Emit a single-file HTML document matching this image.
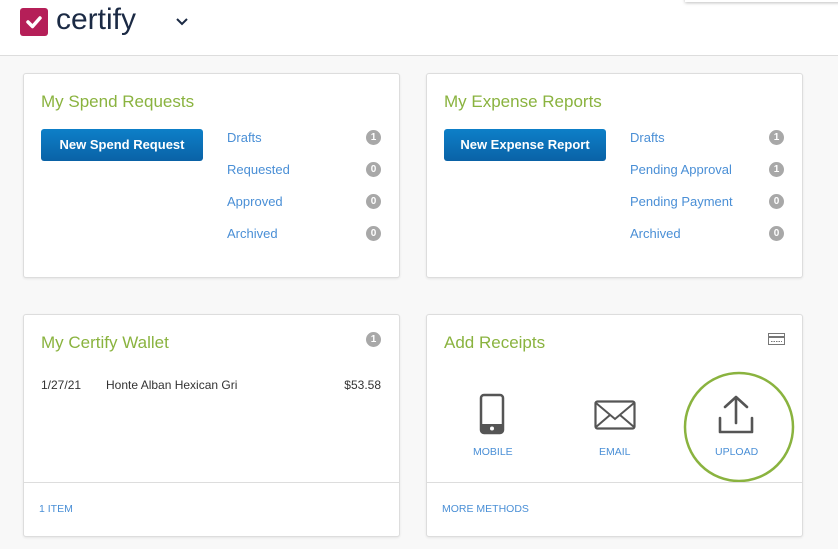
<!DOCTYPE html>
<html><head><style>
*{margin:0;padding:0;box-sizing:border-box}
body{width:838px;height:549px;background:#f8f8f8;font-family:"Liberation Sans",sans-serif;position:relative;overflow:hidden}
.hdr{position:absolute;left:0;top:0;width:838px;height:56px;background:#fff;border-bottom:1px solid #ddd}
.card{position:absolute;background:#fff;border:1px solid #ddd;border-radius:3px;box-shadow:0 1px 2px rgba(0,0,0,.08)}
.t{position:absolute;left:17px;color:#8ab33f;font-size:17px;white-space:nowrap}
.btn{position:absolute;left:17px;top:55px;width:162px;height:32px;border-radius:3px;background:linear-gradient(#0d7fc8,#0a62a6);color:#fff;font-weight:bold;font-size:13px;text-align:center;line-height:32px}
.l{position:absolute;font-size:13px;color:#4a8fd6;white-space:nowrap}
.b{position:absolute;width:15px;height:15px;border-radius:50%;background:#a8a8a8;color:#fff;font-size:10px;font-weight:bold;text-align:center;line-height:15px}
.s{position:absolute;font-size:10.5px;color:#4a8fd6;white-space:nowrap}
.ft{position:absolute;left:0;right:0;top:167px;border-top:1px solid #ddd}
</style></head><body>
<div class="hdr">
<div style="position:absolute;left:20px;top:8px;width:28px;height:28px;background:#b51f58;border-radius:3px"></div>
<svg style="position:absolute;left:20px;top:8px" width="28" height="28"><path d="M8 14 L12.5 18.5 L20 10" stroke="#fff" stroke-width="3.5" fill="none" stroke-linecap="round" stroke-linejoin="round"/></svg>
<div style="position:absolute;left:56px;top:3px;font-size:30px;color:#1b2a44">certify</div>
<svg style="position:absolute;left:175px;top:17px" width="14" height="10"><path d="M2 2 L7 7 L12 2" stroke="#1b2a44" stroke-width="2" fill="none"/></svg>
<div style="position:absolute;left:685px;top:-4px;width:160px;height:6px;background:#fff;box-shadow:0 1px 3px rgba(0,0,0,.25)"></div>
</div>

<div class="card" style="left:23px;top:73px;width:377px;height:205px">
<div class="t" style="top:18px">My Spend Requests</div>
<div class="btn">New Spend Request</div>
<div class="l" style="left:203px;top:56px">Drafts</div><div class="b" style="left:342px;top:56px">1</div>
<div class="l" style="left:203px;top:88px">Requested</div><div class="b" style="left:342px;top:88px">0</div>
<div class="l" style="left:203px;top:120px">Approved</div><div class="b" style="left:342px;top:120px">0</div>
<div class="l" style="left:203px;top:152px">Archived</div><div class="b" style="left:342px;top:152px">0</div>
</div>

<div class="card" style="left:426px;top:73px;width:377px;height:205px">
<div class="t" style="top:18px">My Expense Reports</div>
<div class="btn">New Expense Report</div>
<div class="l" style="left:203px;top:56px">Drafts</div><div class="b" style="left:342px;top:56px">1</div>
<div class="l" style="left:203px;top:88px">Pending Approval</div><div class="b" style="left:342px;top:88px">1</div>
<div class="l" style="left:203px;top:120px">Pending Payment</div><div class="b" style="left:342px;top:120px">0</div>
<div class="l" style="left:203px;top:152px">Archived</div><div class="b" style="left:342px;top:152px">0</div>
</div>

<div class="card" style="left:23px;top:314px;width:377px;height:223px">
<div class="t" style="top:18px">My Certify Wallet</div>
<div class="b" style="left:342px;top:17px">1</div>
<div style="position:absolute;left:17px;top:63px;font-size:12px;color:#333">1/27/21</div>
<div style="position:absolute;left:82px;top:63px;font-size:12px;color:#333">Honte Alban Hexican Gri</div>
<div style="position:absolute;right:18px;top:63px;font-size:12px;color:#333">$53.58</div>
<div class="ft"></div>
<div class="s" style="left:15px;top:188px">1 ITEM</div>
</div>

<div class="card" style="left:426px;top:314px;width:377px;height:223px">
<div class="t" style="top:18px">Add Receipts</div>
<svg style="position:absolute;left:341px;top:18px" width="17" height="12"><rect x="0.5" y="0.5" width="16" height="11" fill="#fff" stroke="#777"/><rect x="1" y="3" width="15" height="2" fill="#777"/><path d="M3 8.5h11" stroke="#777" stroke-dasharray="1.5 1"/></svg>
<svg style="position:absolute;left:52px;top:78px" width="26" height="42"><rect x="2" y="2" width="22" height="38" rx="3" fill="none" stroke="#555" stroke-width="2.5"/><rect x="2" y="31" width="22" height="9" fill="#555"/><circle cx="13" cy="35.5" r="2" fill="#fff"/></svg>
<svg style="position:absolute;left:167px;top:85px" width="42" height="30"><rect x="1.5" y="1.5" width="39" height="27" rx="2" fill="none" stroke="#555" stroke-width="2.2"/><path d="M2 3 L21 19 L40 3 M2 27 L16 15 M40 27 L26 15" stroke="#555" stroke-width="2" fill="none"/></svg>
<svg style="position:absolute;left:290px;top:80px" width="38" height="40"><path d="M19 2 V28 M8 12 L19 2 L30 12" stroke="#555" stroke-width="2.6" fill="none" stroke-linecap="round" stroke-linejoin="round"/><path d="M3 23 V37 H35 V23" stroke="#555" stroke-width="2.6" fill="none" stroke-linecap="round" stroke-linejoin="round"/></svg>
<svg style="position:absolute;left:255px;top:55px" width="114" height="114"><circle cx="57" cy="57" r="54" fill="none" stroke="#8ab33f" stroke-width="2.5"/></svg>
<div class="s" style="left:46px;top:131px">MOBILE</div>
<div class="s" style="left:172px;top:131px">EMAIL</div>
<div class="s" style="left:288px;top:131px">UPLOAD</div>
<div class="ft"></div>
<div class="s" style="left:15px;top:188px">MORE METHODS</div>
</div>
</body></html>
